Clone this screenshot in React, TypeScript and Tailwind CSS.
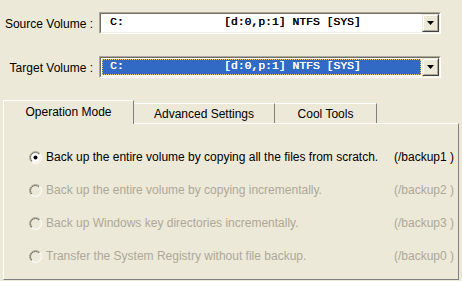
import React from "react";

function Arrow() {
  return (
    <div className="w-[17px] h-full bg-[#ECE9D8] border-t border-l border-[#ECE9D8] border-r border-b border-r-[#404040] border-b-[#404040]">
      <div className="w-full h-full border-t border-l border-white border-r border-b border-r-[#ACA899] border-b-[#ACA899] flex items-center justify-center">
        <svg width="7" height="4" viewBox="0 0 7 4">
          <path d="M0 0H7L3.5 4Z" fill="#000" />
        </svg>
      </div>
    </div>
  );
}

function Combo({ selected }: { selected?: boolean }) {
  return (
    <div className="w-[342px] h-[22px] border-t border-l border-[#ACA899] border-r border-b border-r-white border-b-white">
      <div className="w-full h-full border-t border-l border-[#716F64] border-r border-b border-r-[#F1EFE2] border-b-[#F1EFE2] bg-white flex">
        <div className="flex-1 p-[1px] flex">
          <div
            className={
              selected
                ? "flex-1 flex items-center bg-[#316AC5] text-white border border-dotted border-[#E6C872] pl-[7px]"
                : "flex-1 flex items-center text-black pl-[8px]"
            }
          >
            <span className="font-['Liberation_Mono'] text-[11.4px] w-[114px] whitespace-pre [text-shadow:0.3px_0_0_currentColor]">C:</span>
            <span className="font-['Liberation_Mono'] text-[11.4px] whitespace-pre [text-shadow:0.3px_0_0_currentColor]">[d:0,p:1] NTFS [SYS]</span>
          </div>
        </div>
        <Arrow />
      </div>
    </div>
  );
}

function Radio({ checked, disabled }: { checked?: boolean; disabled?: boolean }) {
  const id = checked ? "c" : "d";
  return (
    <svg width="13" height="13" viewBox="0 0 13 13" className="shrink-0">
      <defs>
        <linearGradient id={"o" + id} x1="0" y1="0" x2="1" y2="1">
          <stop offset="0.5" stopColor="#ACA899" />
          <stop offset="0.5" stopColor="#FFFFFF" />
        </linearGradient>
        <linearGradient id={"i" + id} x1="0" y1="0" x2="1" y2="1">
          <stop offset="0.5" stopColor="#716F64" />
          <stop offset="0.5" stopColor="#F1EFE2" />
        </linearGradient>
      </defs>
      <circle cx="6.5" cy="6.5" r="6" fill="none" stroke={`url(#o${id})`} strokeWidth="1" />
      <circle cx="6.5" cy="6.5" r="5" fill={disabled ? "#ECE9D8" : "#FFFFFF"} stroke={`url(#i${id})`} strokeWidth="1" />
      {checked && <circle cx="6.5" cy="6.5" r="2" fill="#000" />}
    </svg>
  );
}

function Option({
  label,
  sw,
  checked,
  disabled,
}: {
  label: string;
  sw: string;
  checked?: boolean;
  disabled?: boolean;
}) {
  return (
    <div className={"h-[20px] flex items-center pl-[25px] pr-[4px] " + (disabled ? "text-[#ACA899]" : "text-black")}>
      <Radio checked={checked} disabled={disabled} />
      <span className="ml-[4px] whitespace-pre">{label}</span>
      <span className="ml-auto whitespace-pre">{sw}</span>
    </div>
  );
}

export default function App() {
  return (
    <div className="w-[462px] h-[281px] bg-[#ECE9D8] font-['Liberation_Sans',Arial,sans-serif] text-[12px] text-black overflow-hidden">
      <div className="pt-[12px] flex flex-col gap-[22px]">
        <div className="flex items-center">
          <div className="w-[93px] text-right pt-[2px]">Source Volume :</div>
          <div className="ml-[6px]">
            <Combo />
          </div>
        </div>
        <div className="flex items-center">
          <div className="w-[93px] text-right pt-[2px]">Target Volume :</div>
          <div className="ml-[6px]">
            <Combo selected />
          </div>
        </div>
      </div>

      <div className="mt-[21px] pl-[3px] flex items-end h-[24px] relative z-10">
        <div className="w-[131px] h-[24px] bg-[#ECE9D8] border-t border-l border-white border-r border-r-[#808080] flex items-start justify-center pt-[2px] -mb-px">
          Operation Mode
        </div>
        <div className="w-[141px] h-[20px] border-t border-white border-r border-r-[#808080] flex items-start justify-center pt-[1px]">
          Advanced Settings
        </div>
        <div className="w-[102px] h-[20px] border-t border-white border-r border-r-[#808080] flex items-start justify-center pt-[1px]">
          Cool Tools
        </div>
      </div>

      <div className="mx-[3px] h-[157px] border-t border-l border-white border-r border-b border-r-[#808080] border-b-[#808080] pt-[23px] flex flex-col gap-[13px]">
        <Option checked label="Back up the entire volume by copying all the files from scratch." sw="(/backup1 )" />
        <Option disabled label="Back up the entire volume by copying incrementally." sw="(/backup2 )" />
        <Option disabled label="Back up Windows key directories incrementally." sw="(/backup3 )" />
        <Option disabled label="Transfer the System Registry without file backup." sw="(/backup0 )" />
      </div>
    </div>
  );
}
